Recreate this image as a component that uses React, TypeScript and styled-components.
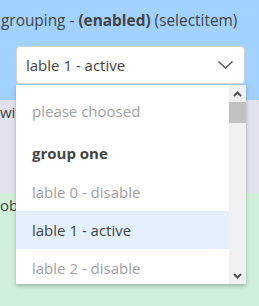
import React from 'react';
import styled, {createGlobalStyle} from 'styled-components';

const GlobalStyle = createGlobalStyle`
  html, body {
    margin: 0;
    padding: 0;
  }
  body {
    font-family: "Open Sans", "Noto Sans", sans-serif;
    color: #444;
    overflow: hidden;
  }
`;

const Page = styled.div`
  position: relative;
  width: 259px;
  height: 306px;
  overflow: hidden;
`;

const Header = styled.div`
  background-color: #a0d1ff;
  height: 100px;
  padding-top: 9px;
  box-sizing: border-box;
`;

const Title = styled.div`
  font-size: 15.4px;
  line-height: 24px;
  padding-left: 1px;
  white-space: nowrap;
`;

const SelectBox = styled.div`
  margin: 13px 0 0 16px;
  width: 229px;
  height: 38px;
  box-sizing: border-box;
  background: #fff;
  border: 1px solid #d4d4d4;
  border-radius: 4px;
  display: flex;
  align-items: center;
  justify-content: space-between;
  padding: 0 11px 0 9px;
  font-size: 15px;
`;

const Section = styled.div<{bg: string; h: number}>`
  background-color: ${({bg}) => bg};
  height: ${({h}) => h}px;
  padding-top: 2px;
  box-sizing: border-box;
  font-size: 15px;
  line-height: 20px;
`;

const Dropdown = styled.div`
  position: absolute;
  top: 85px;
  left: 16px;
  width: 230px;
  height: 199px;
  background: #fff;
  box-shadow: 0 2px 4px rgba(0, 0, 0, 0.25);
  display: flex;
  overflow: hidden;
`;

const List = styled.div`
  flex: 1;
  padding-top: 7px;
`;

const Option = styled.div<{disabled?: boolean; active?: boolean}>`
  height: 38px;
  display: flex;
  align-items: center;
  padding-left: 16px;
  font-size: 15px;
  color: ${({disabled}) => (disabled ? '#a2a2a2' : '#444')};
  background: ${({active}) => (active ? '#e3f0fb' : 'transparent')};
`;

const GroupLabel = styled.div`
  height: 40px;
  margin-top: 3px;
  display: flex;
  align-items: center;
  padding-left: 16px;
  font-size: 15px;
  font-weight: 700;
  color: #444;
`;

const ScrollBar = styled.div`
  width: 17px;
  background: #f0f0f0;
  display: flex;
  flex-direction: column;
  align-items: center;
`;

const ArrowBtn = styled.div`
  height: 17px;
  width: 17px;
  display: flex;
  align-items: center;
  justify-content: center;
`;

const Thumb = styled.div`
  width: 17px;
  height: 21px;
  background: #c1c1c1;
`;

const Track = styled.div`
  flex: 1;
`;

const Chevron = ({up}: {up?: boolean}) => (
    <svg width="9" height="6" viewBox="0 0 9 6">
        <path d={up ? 'M1 5 L4.5 1.5 L8 5' : 'M1 1 L4.5 4.5 L8 1'} fill="none" stroke="#505050" strokeWidth="2"/>
    </svg>
)

const App = () => {
    return (
        <Page>
            <GlobalStyle/>
            <Header>
                <Title>grouping - <b>(enabled)</b> (selectitem)</Title>
                <SelectBox>
                    <span>lable 1 - active</span>
                    <svg width="15" height="8" viewBox="0 0 15 8">
                        <path d="M0.5 0.5 L7.5 7 L14.5 0.5" fill="none" stroke="#555" strokeWidth="1.4"/>
                    </svg>
                </SelectBox>
            </Header>
            <Section bg="#e1e1ef" h={93}>with</Section>
            <Section bg="#d0f0db" h={113}>object</Section>
            <Dropdown>
                <List>
                    <Option disabled>please choosed</Option>
                    <GroupLabel>group one</GroupLabel>
                    <Option disabled>lable 0 - disable</Option>
                    <Option active>lable 1 - active</Option>
                    <Option disabled>lable 2 - disable</Option>
                </List>
                <ScrollBar>
                    <ArrowBtn><Chevron up/></ArrowBtn>
                    <Thumb/>
                    <Track/>
                    <ArrowBtn><Chevron/></ArrowBtn>
                </ScrollBar>
            </Dropdown>
        </Page>
    )
}

export default App;
